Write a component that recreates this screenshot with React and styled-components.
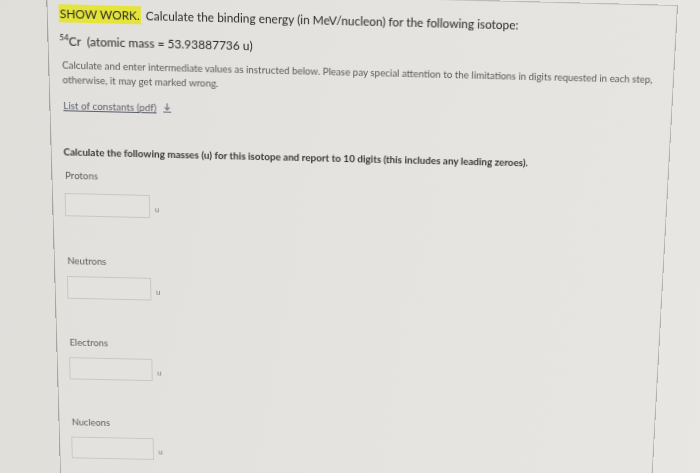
import React from 'react';
import styled, { createGlobalStyle } from 'styled-components';

// the reference is a photo of a screen, so the panel is drawn flat and then
// mapped onto the slightly tilted quad it occupies in the picture
const PANEL_W = 632;
const PANEL_H = 484;

const quadTransform = (w, h, [[x0, y0], [x1, y1], [x2, y2], [x3, y3]]) => {
	const dx1 = x1 - x2;
	const dx2 = x3 - x2;
	const dx3 = x0 - x1 + x2 - x3;
	const dy1 = y1 - y2;
	const dy2 = y3 - y2;
	const dy3 = y0 - y1 + y2 - y3;
	const den = dx1 * dy2 - dx2 * dy1;
	const g = (dx3 * dy2 - dx2 * dy3) / den;
	const k = (dx1 * dy3 - dx3 * dy1) / den;
	const a = x1 - x0 + g * x1;
	const b = x3 - x0 + k * x3;
	const d = y1 - y0 + g * y1;
	const e = y3 - y0 + k * y3;
	const m = [a / w, d / w, 0, g / w, b / h, e / h, 0, k / h, 0, 0, 1, 0, x0, y0, 0, 1];
	return `matrix3d(${m.map((v) => v.toFixed(8)).join(',')})`;
};

// corners: top-left, top-right, bottom-right, bottom-left
const panelTransform = quadTransform(PANEL_W, PANEL_H, [
	[46, -11],
	[678, 5],
	[652, 485],
	[60, 473],
]);

const GlobalStyle = createGlobalStyle`
	html, body {
		margin: 0;
		padding: 0;
		width: 700px;
		height: 473px;
		overflow: hidden;
		background: linear-gradient(100deg, #dfded9 0%, #e4e3df 50%, #e8e7e4 100%);
		font-family: Lato, "Open Sans", sans-serif;
	}
`;

const Page = styled.div`
	position: relative;
	width: 700px;
	height: 473px;
	overflow: hidden;
`;

const Panel = styled.div`
	width: ${PANEL_W}px;
	height: ${PANEL_H}px;
	box-sizing: border-box;
	border-left: 1px solid #a6a5a1;
	border-right: 1px solid #b3b2ae;
	border-top: 1px solid #bdbcb8;
	background: linear-gradient(100deg, #e1e0dc 0%, #e4e3df 50%, #e6e5e1 100%);
	padding: 13px 0 0 11px;
	transform-origin: 0 0;
	transform: ${panelTransform};
`;

const Title = styled.div`
	font-size: 11.9px;
	color: #2c2c2c;
	line-height: 18px;
`;

const Highlight = styled.span`
	background: #e4e43a;
	padding: 1px 1px;
	margin-right: 5px;
`;

const Isotope = styled.div`
	font-size: 12px;
	color: #2c2c2c;
	line-height: 18px;
	margin-top: 8px;

	sup {
		font-size: 8px;
		vertical-align: 5px;
		line-height: 0;
	}
`;

const Note = styled.p`
	font-size: 9.9px;
	line-height: 13.5px;
	color: #5a5a5a;
	margin: 7px 0 0 2px;
	width: 612px;
`;

const ConstLink = styled.a`
	display: flex;
	width: max-content;
	align-items: center;
	gap: 6px;
	font-size: 10px;
	line-height: 12px;
	color: #5d5f6c;
	text-decoration: underline;
	margin: 12px 0 0 2px;
`;

const Section = styled.div`
	margin: 32px 0 0 1px;
`;

const Instruction = styled.div`
	font-size: 10.1px;
	font-weight: 700;
	color: #383838;
	line-height: 14px;
`;

const Field = styled.div`
	display: flex;
	flex-direction: column;
	margin-top: ${(p) => p.top}px;
`;

const Label = styled.div`
	font-size: 9.8px;
	color: #5c5c5c;
	line-height: 12px;
	margin-left: 1px;
`;

const InputRow = styled.div`
	display: flex;
	align-items: flex-end;
	gap: 5px;
	margin-top: ${(p) => p.gap}px;
`;

const Box = styled.div`
	width: 87px;
	height: 23px;
	box-sizing: border-box;
	border: 1px solid #c8c7c3;
	background: #e3e2de;
`;

const Unit = styled.span`
	font-size: 8px;
	color: #777;
	line-height: 10px;
	margin-bottom: 4px;
`;

const DownloadIcon = () => (
	<svg width="10" height="11" viewBox="0 0 10 11" fill="none" stroke="#6b6e80" strokeWidth="1.1">
		<path d="M5 1v6M2.5 4.8L5 7.3l2.5-2.5M1 9.5h8" />
	</svg>
);

const fields = [
	{ name: 'Protons', top: 10, gap: 12 },
	{ name: 'Neutrons', top: 38, gap: 10 },
	{ name: 'Electrons', top: 38, gap: 10 },
	{ name: 'Nucleons', top: 38, gap: 10 },
];

export default function App() {
	return (
		<Page>
			<GlobalStyle />
			<Panel>
				<Title>
					<Highlight>SHOW WORK.</Highlight>Calculate the binding energy (in MeV/nucleon) for the following isotope:
				</Title>
				<Isotope>
					<sup>54</sup>Cr&nbsp; (atomic mass = 53.93887736 u)
				</Isotope>
				<Note>
					Calculate and enter intermediate values as instructed below. Please pay special attention to the limitations in digits requested in each step, otherwise, it may get marked wrong.
				</Note>
				<ConstLink>
					List of constants (pdf) <DownloadIcon />
				</ConstLink>
				<Section>
					<Instruction>
						Calculate the following masses (u) for this isotope and report to 10 digits (this includes any leading zeroes).
					</Instruction>
					{fields.map((f) => (
						<Field key={f.name} top={f.top}>
							<Label>{f.name}</Label>
							<InputRow gap={f.gap}>
								<Box />
								<Unit>u</Unit>
							</InputRow>
						</Field>
					))}
				</Section>
			</Panel>
		</Page>
	);
}
